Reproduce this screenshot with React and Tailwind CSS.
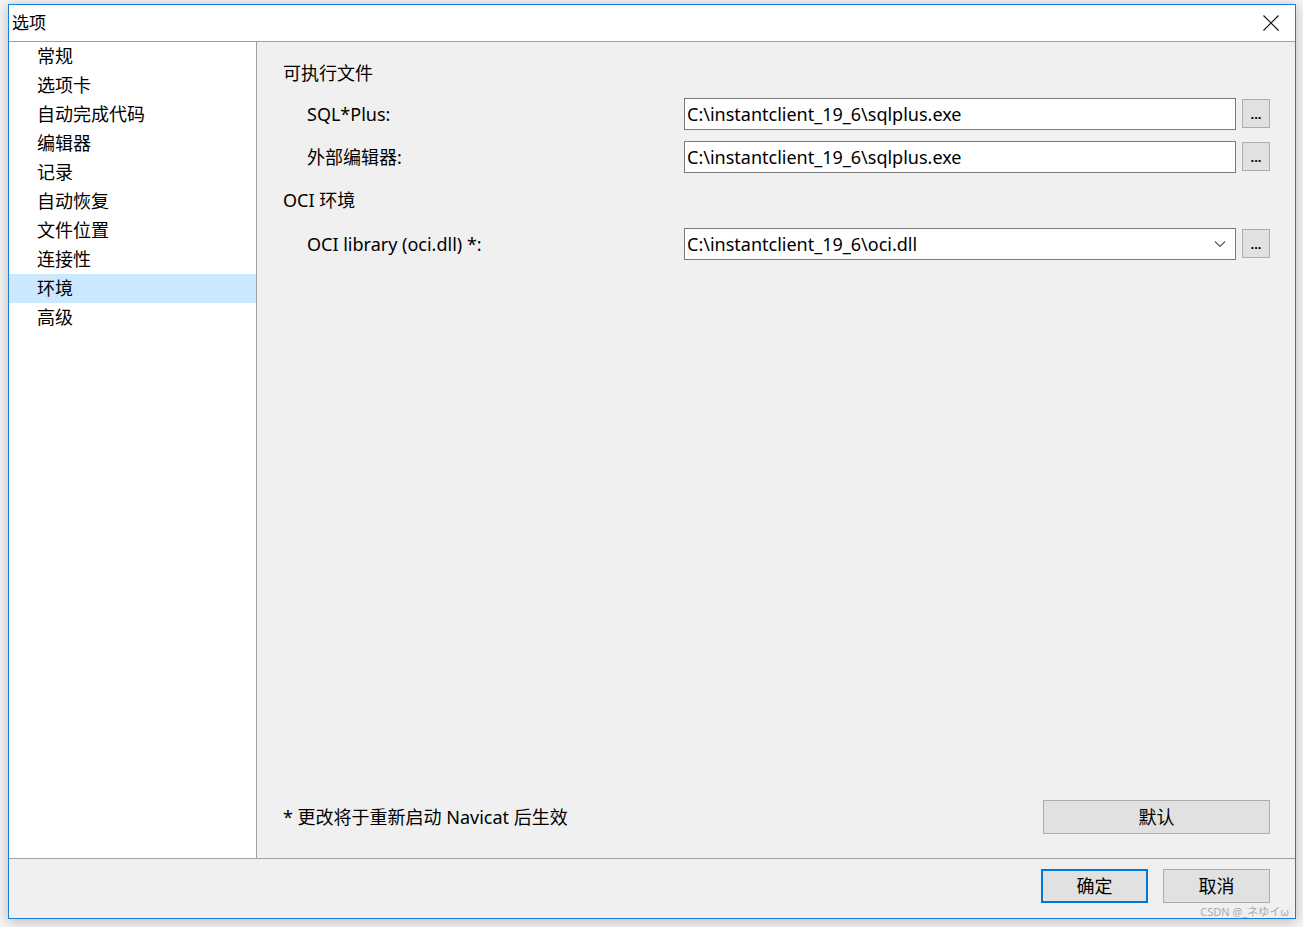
import React from 'react';

const font = { fontFamily: '"Noto Sans", "Noto Sans CJK SC", sans-serif' };

const navItems = ['常规', '选项卡', '自动完成代码', '编辑器', '记录', '自动恢复', '文件位置', '连接性', '环境', '高级'];

const BrowseButton = () => (
  <button className="ml-[6px] mt-[1px] w-[28px] h-[29px] border border-[#adadad] bg-[#e1e1e1] flex items-end justify-center pb-[6px] text-[13px] font-bold leading-none text-black">
    ...
  </button>
);

const PathRow = ({ label, value, combo }) => (
  <div className="flex items-start h-[32px] pl-[50px]">
    <div className="w-[377px] h-[32px] flex items-center text-[18px] text-black">{label}</div>
    <div className="w-[552px] h-[32px] border border-[#7a7a7a] bg-white flex items-center pl-[2px] pr-[8px]">
      <span className="flex-1 text-[18px] text-black whitespace-nowrap">{value}</span>
      {combo && (
        <svg width="12" height="8" viewBox="0 0 12 8" className="mr-[1px]">
          <path d="M1 1.5 L6 6.5 L11 1.5" fill="none" stroke="#555" strokeWidth="1.1" />
        </svg>
      )}
    </div>
    <BrowseButton />
  </div>
);

export default function App() {
  return (
    <div className="w-[1303px] h-[927px] bg-[#f4f4f4] pt-[4px] pl-[8px] overflow-hidden" style={font}>
      <div className="relative w-[1288px] h-[915px] border border-[#1a7fd4] bg-white flex flex-col shadow-[0_2px_12px_rgba(0,0,0,0.25)]">
        {/* title bar */}
        <div className="h-[37px] flex items-center justify-between border-b border-[#a0a0a0] pl-[3px] pr-[16px]">
          <span className="text-[17px] text-black">选项</span>
          <svg width="16" height="16" viewBox="0 0 16 16">
            <path d="M0.5 0.5 L15.5 15.5 M15.5 0.5 L0.5 15.5" stroke="#111" strokeWidth="1.2" />
          </svg>
        </div>

        {/* body */}
        <div className="flex flex-1 min-h-0">
          <div className="w-[248px] bg-white border-r border-[#a0a0a0] flex flex-col">
            {navItems.map((item) => (
              <div
                key={item}
                className={`h-[29px] flex items-center pl-[28px] text-[18px] text-black ${item === '环境' ? 'bg-[#cce8ff]' : ''}`}
              >
                {item}
              </div>
            ))}
          </div>

          <div className="flex-1 bg-[#f0f0f0] flex flex-col pr-[25px]">
            <div className="h-[26px] mt-[18px] pl-[26px] flex items-center text-[18px] text-black">可执行文件</div>
            <div className="mt-[12px]">
              <PathRow label="SQL*Plus:" value="C:\instantclient_19_6\sqlplus.exe" />
            </div>
            <div className="mt-[11px]">
              <PathRow label="外部编辑器:" value="C:\instantclient_19_6\sqlplus.exe" />
            </div>
            <div className="h-[26px] mt-[14px] pl-[26px] flex items-center text-[18px] text-black">OCI 环境</div>
            <div className="mt-[15px]">
              <PathRow label="OCI library (oci.dll) *:" value="C:\instantclient_19_6\oci.dll" combo />
            </div>

            <div className="flex-1" />

            <div className="flex items-center justify-between pl-[26px] mb-[24px]">
              <span className="text-[18px] text-black">* 更改将于重新启动 Navicat 后生效</span>
              <button className="w-[227px] h-[34px] border border-[#adadad] bg-[#e1e1e1] text-[18px] text-black">默认</button>
            </div>
          </div>
        </div>

        {/* footer */}
        <div className="h-[60px] border-t border-[#a0a0a0] bg-[#f0f0f0] flex justify-end items-start pt-[10px] pr-[25px] gap-[15px]">
          <button className="w-[107px] h-[34px] border-2 border-[#0078d7] bg-[#e1e1e1] text-[18px] text-black">确定</button>
          <button className="w-[107px] h-[34px] border border-[#adadad] bg-[#e1e1e1] text-[18px] text-black">取消</button>
        </div>

        <span className="absolute right-[6px] bottom-[1px] text-[11px] leading-none text-[#aaaaaa]">CSDN @_ネゆイω</span>
      </div>
    </div>
  );
}
